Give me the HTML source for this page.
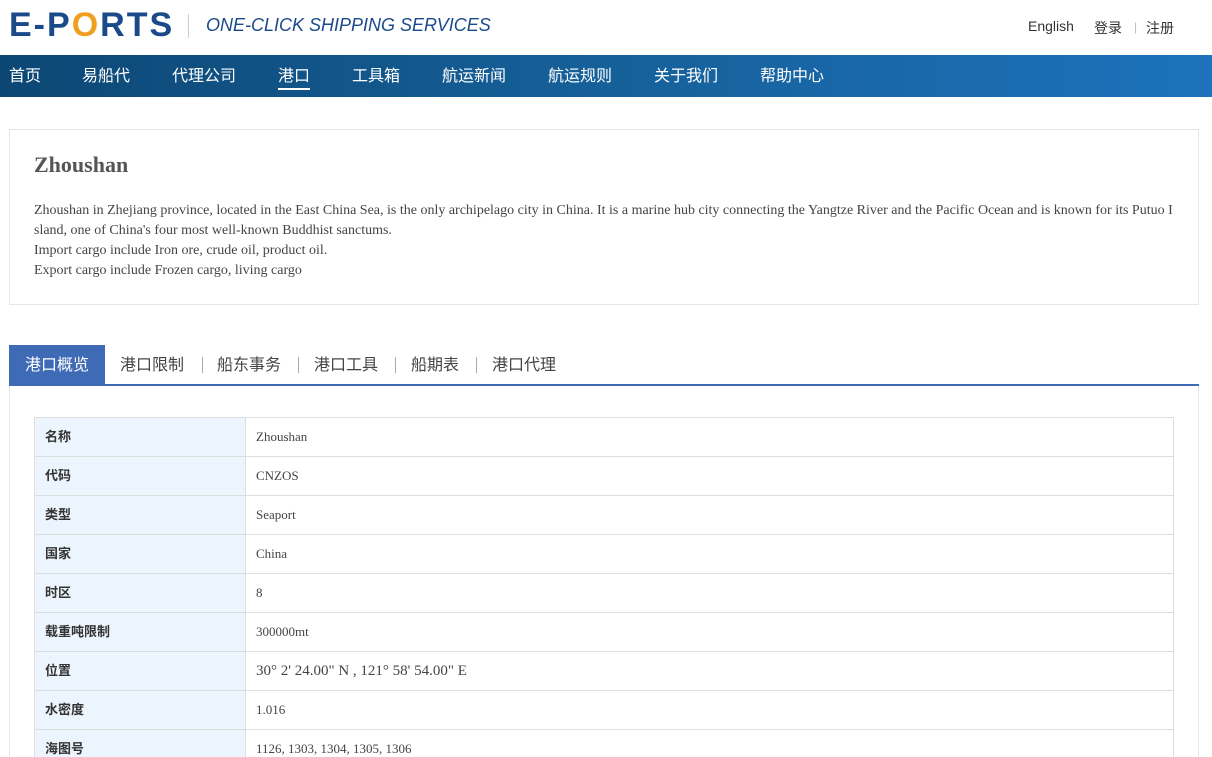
<!DOCTYPE html>
<html><head><meta charset="utf-8"><style>
*{margin:0;padding:0;box-sizing:border-box}
html,body{width:1212px;height:757px;overflow:hidden}
body{background:#fff;font-family:"Liberation Sans","Noto Sans CJK SC",sans-serif;position:relative}
.hdr{height:55px;position:relative}
.logo{position:absolute;left:9px;top:6px;font:bold 34px "Liberation Sans",sans-serif;color:#1a4a8a;letter-spacing:2px}
.sep{position:absolute;left:188px;top:14px;width:1px;height:24px;background:#ccc}
.slog{position:absolute;left:206px;top:15px;font:italic 18px "Liberation Sans",sans-serif;color:#1a4a8a}
.top{position:absolute;top:18px;font-size:14px;color:#333}
.nav{position:absolute;top:55px;left:0;width:1212px;height:42px;background:linear-gradient(90deg,#0c4774,#155e96 45%,#1d72bb)}
.nav span{position:absolute;top:11px;line-height:22px;color:#fff;font-size:16px}
.info{position:absolute;left:9px;top:129px;width:1190px;height:176px;border:1px solid #e6e6e6}
.info h1{position:absolute;left:24px;top:22px;font:bold 22px "Liberation Serif",serif;color:#555}
.info p{position:absolute;left:24px;top:71px;width:1150px;font:14px/20px "Liberation Serif",serif;color:#444;white-space:nowrap}
.tabs{position:absolute;left:9px;top:345px;width:1190px;height:41px;border-bottom:2px solid #3f6ab5}
.tab{position:absolute;top:0;height:39px;line-height:42px;font-size:16px;color:#444}
.act{background:#3f6ab5;color:#fff;left:0;width:96px;text-align:center}
.bar{position:absolute;top:12px;width:1px;height:16px;background:#aaa}
.cont{position:absolute;left:9px;top:386px;width:1190px;height:400px;border:1px solid #e6e6e6;border-top:none}
table{position:absolute;left:34px;top:417px;width:1140px;border-collapse:collapse}
td{height:39px;border:1px solid #ddd;font:13px "Liberation Serif",serif;color:#444;padding-left:10px;vertical-align:middle}
td.l{width:211px;background:#ecf5fd;font:bold 13px "Liberation Sans","Noto Sans CJK SC",sans-serif;color:#333;padding-bottom:3px}
</style></head><body>
<div class="hdr">
<div class="logo">E-P<span style="color:#f0a020">O</span>RTS</div>
<div class="sep"></div>
<div class="slog">ONE-CLICK SHIPPING SERVICES</div>
<span class="top" style="left:1028px">English</span>
<span class="top" style="left:1094px">登录</span>
<span class="top" style="left:1134px;color:#bbb;font-size:12px;top:20px">|</span>
<span class="top" style="left:1146px">注册</span>
</div>
<div class="nav">
<span style="left:9px">首页</span><span style="left:82px">易船代</span><span style="left:172px">代理公司</span>
<span style="left:278px;border-bottom:2px solid #fff">港口</span>
<span style="left:352px">工具箱</span><span style="left:442px">航运新闻</span><span style="left:548px">航运规则</span><span style="left:654px">关于我们</span><span style="left:760px">帮助中心</span>
</div>
<div class="info"><h1>Zhoushan</h1>
<p>Zhoushan in Zhejiang province, located in the East China Sea, is the only archipelago city in China. It is a marine hub city connecting the Yangtze River and the Pacific Ocean and is known for its Putuo I<br>sland, one of China's four most well-known Buddhist sanctums.<br>Import cargo include Iron ore, crude oil, product oil.<br>Export cargo include Frozen cargo, living cargo</p></div>
<div class="tabs">
<div class="tab act">港口概览</div>
<div class="tab" style="left:111px">港口限制</div><div class="bar" style="left:193px"></div>
<div class="tab" style="left:208px">船东事务</div><div class="bar" style="left:289px"></div>
<div class="tab" style="left:305px">港口工具</div><div class="bar" style="left:386px"></div>
<div class="tab" style="left:402px">船期表</div><div class="bar" style="left:467px"></div>
<div class="tab" style="left:483px">港口代理</div>
</div>
<div class="cont"></div>
<table>
<tr><td class="l">名称</td><td>Zhoushan</td></tr>
<tr><td class="l">代码</td><td>CNZOS</td></tr>
<tr><td class="l">类型</td><td>Seaport</td></tr>
<tr><td class="l">国家</td><td>China</td></tr>
<tr><td class="l">时区</td><td>8</td></tr>
<tr><td class="l">载重吨限制</td><td>300000mt</td></tr>
<tr><td class="l">位置</td><td style="font-size:15px">30° 2' 24.00" N , 121° 58' 54.00" E</td></tr>
<tr><td class="l">水密度</td><td>1.016</td></tr>
<tr><td class="l">海图号</td><td>1126, 1303, 1304, 1305, 1306</td></tr>
</table>
</body></html>
